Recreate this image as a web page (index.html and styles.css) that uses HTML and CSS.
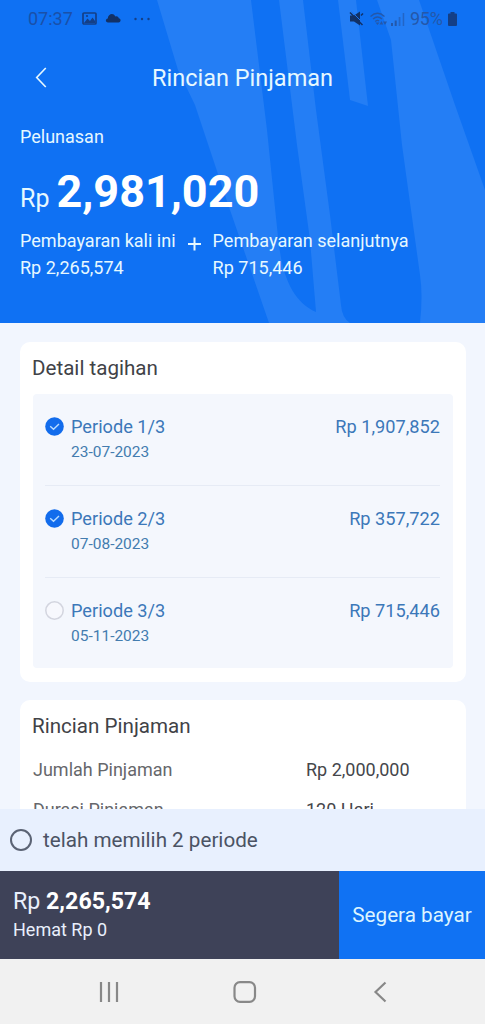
FILE: index.html
```html
<!DOCTYPE html>
<html lang="id">
<head>
<meta charset="utf-8">
<title>Rincian Pinjaman</title>
<link rel="stylesheet" href="styles.css">
</head>
<body>
<div class="screen">
  <header class="hero">
    <svg class="hero-art" viewBox="0 0 485 323" aria-hidden="true">
      <path d="M157 0H251L267 130L278 237C282 276 292 301 316 312L310 240L297 145L279 0H303L316 110L330 215L341 305Q342 318 350 323H269L230 210L195 105L178 70Z"/>
      <path d="M338 0H356L368 106L350 100Z"/>
      <path d="M377 0H419L455 105L485 190V323H420Q423 295 420 275L402 145L391 40Z"/>
    </svg>
    <div class="status">
      <span class="clock">07:37</span>
      <svg class="picture-icon" viewBox="0 0 15 13"><rect x="1" y="1" width="13" height="11" rx="1" fill="none" stroke="currentColor" stroke-width="1.7"/><path d="M2 11L5.500 6.500L8 9L10.500 5.500L13 9V11Z" fill="currentColor"/><circle cx="5" cy="4" r="1.100" fill="currentColor"/></svg>
      <svg class="cloud-icon" viewBox="0 0 16 10"><path d="M3 9.500C.4 9.500 0 6 2.800 5.400C3 1 8.500-.6 10.200 3.400C12.500 2.700 13.600 4 13.700 5.300C16.400 5.600 16 9.500 13.500 9.500Z" fill="currentColor"/></svg>
      <svg class="dots-icon" viewBox="0 0 16 4"><g fill="currentColor"><circle cx="1.500" cy="2" r="1.200"/><circle cx="8" cy="2" r="1.200"/><circle cx="14.500" cy="2" r="1.200"/></g></svg>
      <svg class="mute-icon" viewBox="0 0 15 15"><path d="M1 4.500H5L11 .5V14.500L5 10.500H1Z" fill="currentColor"/><path d="M2.500 .5L15 13" stroke="#1b72ee" stroke-width="1"/><path d="M1 1.500L13.500 14M12 4.500L14 2.500" stroke="currentColor" stroke-width="1.500"/></svg>
      <svg class="wifi-icon" viewBox="0 0 17 14"><g fill="none" stroke="currentColor" stroke-width="1.300"><path d="M.5 4.500Q7.500-2 14.500 4.500M3 7Q7.500 3 12 7M5.200 9.500Q7.500 7.500 9 9"/></g><path d="M7.500 13L5.500 10.500H9.500ZM9.500 12.500L11.500 9L13.200 12.500ZM13 9.500H17L15 13Z" fill="currentColor"/></svg>
      <svg class="signal-icon" viewBox="0 0 14 14"><path d="M0 11H2V14H0ZM3.700 8.500H5.700V14H3.700Z" fill="currentColor"/><path d="M7.700 5H9.400V14H7.700ZM11.700 1H13.200V14H11.700Z" fill="currentColor" opacity=".65"/></svg>
      <span class="battery-text">95%</span>
      <svg class="battery-icon" viewBox="0 0 9 14"><path d="M2.500 0H6.500V1.500H8Q9 1.500 9 2.500V13Q9 14 8 14H1Q0 14 0 13V2.500Q0 1.500 1 1.500H2.500Z" fill="currentColor"/></svg>
    </div>
    <div class="titlebar">
      <svg class="back" viewBox="0 0 12 22"><path d="M11 1L1.500 11L11 21" fill="none" stroke="currentColor" stroke-width="1.700"/></svg>
      <h1>Rincian Pinjaman</h1>
    </div>
    <div class="summary">
      <div class="summary-label">Pelunasan</div>
      <div class="total"><span class="currency">Rp</span><strong>2,981,020</strong></div>
      <div class="split">
        <div><div>Pembayaran kali ini</div><div>Rp 2,265,574</div></div>
        <svg class="plus" viewBox="0 0 13 14"><path d="M6.500 .5V13.500M0 7H13" stroke="currentColor" stroke-width="2"/></svg>
        <div><div>Pembayaran selanjutnya</div><div>Rp 715,446</div></div>
      </div>
    </div>
  </header>
  <main class="content">
    <section class="card bills">
      <h2>Detail tagihan</h2>
      <div class="periods">
        <div class="period">
          <svg class="check" viewBox="0 0 19 19"><circle cx="9.500" cy="9.500" r="9.300" fill="#126cec"/><path d="M5.200 9.300L8.500 12.300L14 6.900" fill="none" stroke="#b9dcff" stroke-width="1.400"/></svg>
          <div class="period-info"><div>Periode 1/3</div><div class="date">23-07-2023</div></div>
          <div class="amount">Rp 1,907,852</div>
        </div>
        <div class="period">
          <svg class="check" viewBox="0 0 19 19"><circle cx="9.500" cy="9.500" r="9.300" fill="#126cec"/><path d="M5.200 9.300L8.500 12.300L14 6.900" fill="none" stroke="#b9dcff" stroke-width="1.400"/></svg>
          <div class="period-info"><div>Periode 2/3</div><div class="date">07-08-2023</div></div>
          <div class="amount">Rp 357,722</div>
        </div>
        <div class="period">
          <svg class="check" viewBox="0 0 19 19"><circle cx="9.500" cy="9.500" r="8.700" fill="#f7f8fd" stroke="#d3d5df" stroke-width="1.500"/></svg>
          <div class="period-info"><div>Periode 3/3</div><div class="date">05-11-2023</div></div>
          <div class="amount">Rp 715,446</div>
        </div>
      </div>
    </section>
    <section class="card loan">
      <h2>Rincian Pinjaman</h2>
      <dl>
        <dt>Jumlah Pinjaman</dt><dd>Rp 2,000,000</dd>
        <dt>Durasi Pinjaman</dt><dd>120 Hari</dd>
      </dl>
    </section>
  </main>
  <div class="selection"><span class="radio"></span><span>telah memilih 2 periode</span></div>
  <footer class="paybar">
    <div class="pay-total"><div class="pay-amount">Rp <strong>2,265,574</strong></div><div class="saving">Hemat Rp 0</div></div>
    <button class="pay-button">Segera bayar</button>
  </footer>
  <nav class="navbar">
    <svg viewBox="0 0 22 22"><path d="M2 1V21M10 1V21M18 1V21" stroke="currentColor" stroke-width="2.200"/></svg>
    <svg viewBox="0 0 24 22"><rect x="1.500" y="1.200" width="20.500" height="19.600" rx="5.500" fill="none" stroke="currentColor" stroke-width="2.200"/></svg>
    <svg viewBox="0 0 22 22"><path d="M16.500 1.500L6.500 11L16.500 20.500" fill="none" stroke="currentColor" stroke-width="2.200"/></svg>
  </nav>
</div>
</body>
</html>
```
FILE: styles.css
```css
* { box-sizing: border-box; }
body { margin: 0; font-family: Roboto, "Liberation Sans", sans-serif; }
h1, h2, dl, dd { margin: 0; font-weight: 400; }
svg { display: block; flex: none; }

.screen { width: 485px; height: 1024px; display: flex; flex-direction: column; overflow: hidden; background: #f2f6fe; }

.hero { position: relative; flex: none; height: 323px; background: #0f71f3; color: #e6f8ff; }
.hero-art { position: absolute; inset: 0; width: 485px; height: 323px; fill: #247ef5; }
.status, .titlebar, .summary { position: relative; }

.status { display: flex; align-items: center; height: 37px; padding: 0 27px 0 28px; color: #143f86; }
.clock { font-size: 18px; line-height: 20px; width: 45px; color: #1a50a9; }
.picture-icon { width: 15px; height: 13px; margin-left: 9px; }
.cloud-icon { width: 16px; height: 10px; margin-left: 8px; margin-top: -2px; color: #123166; }
.dots-icon { width: 16px; height: 4px; margin-left: 13px; }
.mute-icon { width: 15px; height: 15px; margin-left: auto; color: #123166; }
.wifi-icon { width: 17px; height: 14px; margin-left: 6px; color: #2458aa; }
.signal-icon { width: 14px; height: 14px; margin-left: 4px; color: #2458aa; }
.battery-text { font-size: 18px; width: 33px; margin-left: 5px; margin-right: 1px; line-height: 20px; letter-spacing: -.3px; color: #2458aa; }
.battery-icon { width: 9px; height: 14px; margin-left: 4px; margin-right: 1px; }

.titlebar { height: 82px; display: flex; align-items: center; justify-content: center; }
.titlebar .back { position: absolute; left: 35px; top: 30px; width: 12px; height: 21px; }
.titlebar h1 { font-size: 23.500px; line-height: 28px; }

.summary { padding-left: 20px; }
.summary-label { font-size: 18px; line-height: 22px; margin-top: 7px; }
.total { display: flex; align-items: baseline; gap: 7px; height: 60px; margin-top: 16px; line-height: 56px; }
.currency { font-size: 25px; }
.total strong { font-size: 45px; font-weight: 700; color: #fff; }
.split { display: flex; font-size: 18.050px; line-height: 27px; margin-top: 3px; }
.plus { width: 13px; height: 14px; margin: 10px 12px 0; }

.content { flex: 1; min-height: 0; overflow: hidden; padding: 19px 19px 0 20px; }
.card { background: #fff; border-radius: 10px; padding: 12px 13px 14px; }
.card h2 { font-size: 20.600px; line-height: 28px; color: #414247; margin-left: -1px; }
.bills { height: 340px; }
.periods { margin-top: 12px; height: 274px; padding: 0 13px 0 12px; background: #f4f7fd; border-radius: 4px; }
.period { display: flex; align-items: flex-start; height: 92px; padding-top: 20px; border-bottom: 1.500px solid #e6ebf5; color: #3c78b9; font-size: 18.200px; line-height: 26px; }
.period:last-child { border-bottom: 0; }
.check { width: 19px; height: 19px; margin: 3px 7px 0 0; }
.date { font-size: 15.500px; line-height: 24px; color: #437caf; }
.amount { margin-left: auto; }
.loan { margin-top: 18px; height: 340px; }
.loan dl { display: grid; grid-template-columns: 273px 1fr; row-gap: 14px; margin-top: 17px; font-size: 18px; line-height: 26px; }
.loan dt { color: #66676b; }
.loan dd { color: #45464b; }

.selection { flex: none; height: 62px; display: flex; align-items: center; gap: 11px; padding-left: 10px; background: #e8f0fe; color: #4b5364; font-size: 20.650px; }
.radio { width: 22px; height: 22px; border: 2px solid #5b6374; border-radius: 50%; }

.paybar { flex: none; height: 88px; display: flex; color: #e9effc; }
.pay-total { flex: 1; padding: 16px 13px; background: #3e4258; }
.pay-amount { font-size: 23.200px; line-height: 29px; }
.pay-amount strong { color: #fff; }
.saving { font-size: 18px; line-height: 27px; }
.pay-button { width: 146px; border: 0; padding: 0; background: #1072f3; color: #dcf4ff; font: 20.700px/24px Roboto, "Liberation Sans", sans-serif; }

.navbar { flex: none; height: 65px; display: flex; justify-content: space-between; padding: 22px 94px 0 99px; background: #f1f1f1; color: #888; }
.navbar svg { height: 22px; }
```
